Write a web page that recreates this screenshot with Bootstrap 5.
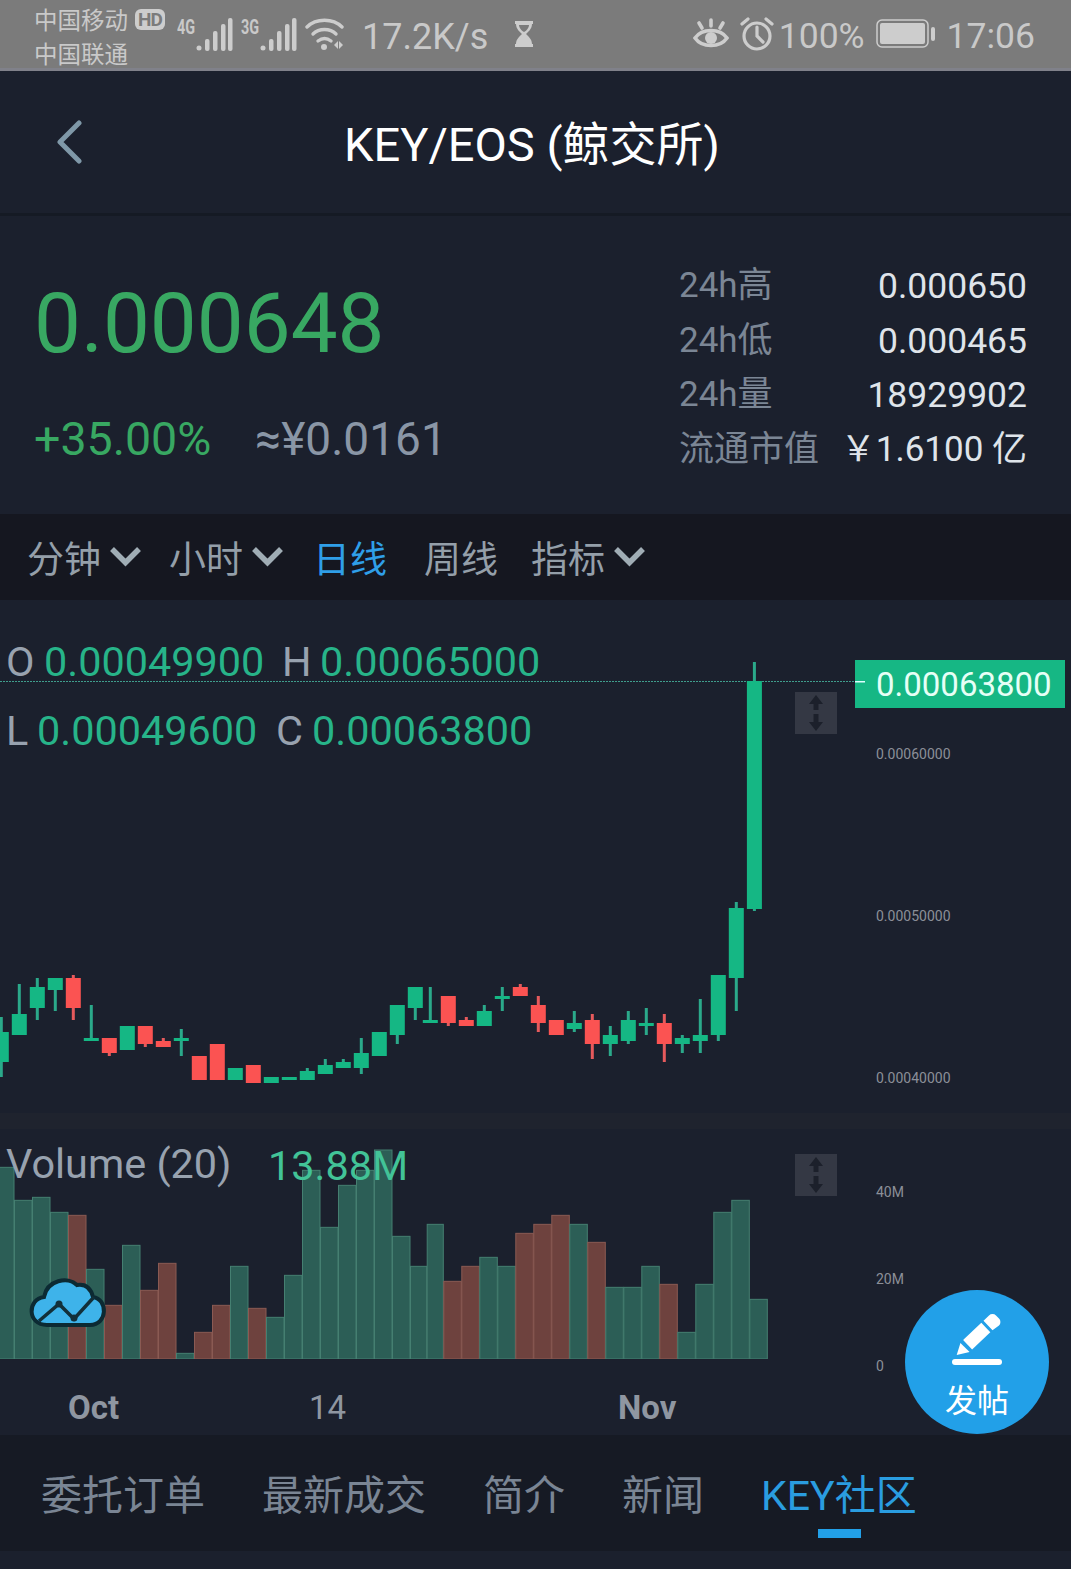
<!DOCTYPE html>
<html lang="zh">
  <head>
    <meta charset="UTF-8" />
    <meta name="viewport" content="width=device-width, initial-scale=1" />
    <title>KEY/EOS</title>
    <link href="https://cdn.jsdelivr.net/npm/bootstrap@5.3.3/dist/css/bootstrap.min.css" rel="stylesheet" />
    <style>
      body { background: #1b202d; font-family: Roboto, "Noto Sans CJK SC", sans-serif; width: 1071px; height: 1569px; overflow: hidden; position: relative; }
      .status-bar { height: 71px; background: #7b7b7b; border-bottom: 3px solid #80818a; color: #c9c9c9; padding: 0 36px 0 34px; }
      .carrier { font-size: 23.500px; line-height: 34px; width: 101px; margin-top: 8px; }
      .hd-tag { background: #cdcdcd; color: #7b7b7b; font-size: 19px; font-weight: 700; line-height: 21px; width: 30px; text-align: center; border-radius: 6px; margin: -29px 12px 0 0; letter-spacing: -1px; }
      .net-tag { font-size: 20px; font-weight: 700; line-height: 16px; margin: -15px 0 0 0; transform: scaleX(.72); transform-origin: left; width: 19px; }
      .speed { font-size: 36px; margin: 6px 26px 0 17px; line-height: 1; }
      .status-num { font-size: 35.500px; line-height: 1; margin-top: 6px; }
      .alarm-ic { margin: 0 5px 0 11px; }
      .batt-ic { margin: 0 10px 0 11px; }
      .top-head { height: 145px; border-bottom: 3px solid #151a24; padding-left: 57px; }
      .top-title { font-size: 47px; color: #fff; margin: 4px 0 0 261px; line-height: 1; }
      .stat-box { height: 298px; padding: 0 44px 0 34px; }
      .big-price { font-size: 83.500px; color: #38a862; line-height: 1; margin-top: 66px; }
      .sub-line { font-size: 46px; line-height: 1; margin-top: 50px; }
      .up-pct { color: #38a862; margin-right: 44px; font-size: 46.500px; }
      .cny-val { color: #8a96a6; }
      .stat-side { width: 348px; margin-top: 43px; font-size: 35.500px; }
      .stat-row { height: 54.5px; line-height: 54px; }
      .stat-row span:first-child { color: #7b8695; font-size: 35px; }
      .stat-row span:last-child { color: #dfe4ea; }
      .stat-row:last-child span:last-child { font-size: 35px; }
      .period-bar { height: 86px; background: #151720; padding: 7px 0 0 27px; color: #949fa9; font-size: 37px; }
      .period-item { margin-right: 33px; line-height: 1; }
      .period-drop { margin-right: 27px; }
      .period-drop + .period-drop { margin-right: 29px; }
      .period-item.period-on { margin-right: 37px; }
      .period-item svg { margin-left: 8px; vertical-align: 6px; }
      .period-on { color: #2f9fe8; }
      .chart-wrap { height: 835px; }
      .chart-wrap svg { display: block; }
      .foot-tabs { height: 116px; background: #161a24; padding: 7px 0 0 41px; gap: 57px; font-size: 41px; color: #7a8594; }
      .foot-tab { line-height: 1; position: relative; }
      .foot-on { color: #2a9de0; }
      .foot-on::after { content: ""; position: absolute; left: 57px; bottom: -21px; width: 43px; height: 9px; background: #22a0e8; }
      .post-btn { position: absolute; left: 905px; top: 1290px; width: 144px; height: 144px; background: #22a0e8; color: #fff; font-size: 32px; line-height: 1; padding: 6px 0 0; border: 0; }
      .post-btn svg { display: block; margin: 0 auto 20px; }
      .axis-sm { font-size: 14px; fill: #8b8f98; font-family: Roboto, sans-serif; }
      .legend-a { font-size: 41.400px; font-family: Roboto, sans-serif; }
      .time-tick { font-size: 33px; fill: #8f96a1; font-family: Roboto, sans-serif; }
    </style>
  </head>
  <body>
    <div class="status-bar d-flex align-items-center justify-content-between">
      <div class="d-flex align-items-center">
        <div class="carrier">中国移动<br />中国联通</div>
        <div class="hd-tag">HD</div>
        <div class="net-tag">4G</div>
        <svg width="37" height="34" viewBox="0 0 37 34" fill="#cdcdcd"><circle cx="3" cy="31" r="2.5"/><rect x="9" y="22" width="4.5" height="12" rx="2"/><rect x="17" y="14" width="4.5" height="20" rx="2"/><rect x="25" y="7" width="4.5" height="27" rx="2"/><rect x="32" y="1" width="4.5" height="33" rx="2"/></svg>
        <div class="net-tag ms-2">3G</div>
        <svg width="37" height="34" viewBox="0 0 37 34" fill="#cdcdcd"><circle cx="3" cy="31" r="2.5"/><rect x="9" y="22" width="4.5" height="12" rx="2"/><rect x="17" y="14" width="4.5" height="20" rx="2"/><rect x="25" y="7" width="4.5" height="27" rx="2"/><rect x="32" y="1" width="4.5" height="33" rx="2"/></svg>
        <svg class="ms-2" width="40" height="34" viewBox="0 0 40 34" fill="none" stroke="#cdcdcd" stroke-width="3.4" stroke-linecap="round"><path d="M2 10C11 1 28 1 37 10"/><path d="M8 17c6-6 17-6 23 0"/><path d="M13 24c4-3 9-3 13 0"/><circle cx="19" cy="30" r="3" fill="#cdcdcd" stroke="none"/><path d="M29 31l4-4v8zM34 27l4 4-4 4z" fill="#cdcdcd" stroke="none" transform="translate(0 -3)"/></svg>
        <div class="speed">17.2K/s</div>
        <svg width="20" height="26" viewBox="0 0 20 26" fill="#cdcdcd"><path d="M1 0h18v3h-1c0 5-4 8-6 10 2 2 6 5 6 10h1v3H1v-3h1c0-5 4-8 6-10-2-2-6-5-6-10H1z"/><path d="M5 4h10c0 3-3 6-5 7-2-1-5-4-5-7z" fill="#7b7b7b"/></svg>
      </div>
      <div class="d-flex align-items-center">
        <svg width="36" height="33" viewBox="0 0 36 33" fill="none" stroke="#cdcdcd" stroke-width="3.6" stroke-linecap="round"><path d="M2 20C9 10 27 10 34 20 27 30 9 30 2 20z"/><circle cx="18" cy="20" r="6" fill="#cdcdcd" stroke="none"/><path d="M18 2v6M6 5l3 5M30 5l-3 5"/></svg>
        <svg class="alarm-ic" width="34" height="34" viewBox="0 0 34 34" fill="none" stroke="#cdcdcd" stroke-width="3.2" stroke-linecap="round"><circle cx="17" cy="19" r="13"/><path d="M17 10v9l6 6M2 7l6-5M32 7l-6-5"/></svg>
        <div class="status-num">100%</div>
        <svg class="batt-ic" width="61" height="30" viewBox="0 0 61 30"><rect x="1" y="1" width="51" height="27" rx="5" fill="none" stroke="#cdcdcd" stroke-width="1.5"/><rect x="4" y="4" width="45" height="21" rx="2" fill="#cdcdcd"/><rect x="55" y="8" width="4" height="14" rx="2" fill="#cdcdcd"/></svg>
        <div class="status-num">17:06</div>
      </div>
    </div>

    <div class="top-head d-flex align-items-center">
      <svg width="26" height="44" viewBox="0 0 26 44" fill="none" stroke="#7f98a8" stroke-width="5" stroke-linecap="round" stroke-linejoin="round"><path d="M22 3 3 22l19 19"/></svg>
      <div class="top-title">KEY/EOS (鲸交所)</div>
    </div>

    <div class="stat-box d-flex justify-content-between">
      <div>
        <div class="big-price">0.000648</div>
        <div class="sub-line"><span class="up-pct">+35.00%</span><span class="cny-val">≈¥0.0161</span></div>
      </div>
      <div class="stat-side">
        <div class="stat-row d-flex justify-content-between"><span>24h高</span><span>0.000650</span></div>
        <div class="stat-row d-flex justify-content-between"><span>24h低</span><span>0.000465</span></div>
        <div class="stat-row d-flex justify-content-between"><span>24h量</span><span>18929902</span></div>
        <div class="stat-row d-flex justify-content-between"><span>流通市值</span><span>￥1.6100 亿</span></div>
      </div>
    </div>

    <div class="period-bar d-flex align-items-center">
      <div class="period-item period-drop">分钟<svg width="33" height="21" viewBox="0 0 33 21" fill="none" stroke="#a0adb5" stroke-width="5.500" stroke-linejoin="miter"><path d="M3 3l13.500 13.500L30 3"/></svg></div>
      <div class="period-item period-drop">小时<svg width="33" height="21" viewBox="0 0 33 21" fill="none" stroke="#a0adb5" stroke-width="5.500" stroke-linejoin="miter"><path d="M3 3l13.500 13.500L30 3"/></svg></div>
      <div class="period-item period-on">日线</div>
      <div class="period-item">周线</div>
      <div class="period-item">指标<svg width="33" height="21" viewBox="0 0 33 21" fill="none" stroke="#a0adb5" stroke-width="5.500" stroke-linejoin="miter"><path d="M3 3l13.500 13.500L30 3"/></svg></div>
    </div>

    <div class="chart-wrap">
      <svg id="chart" width="1071" height="835" viewBox="0 600 1071 835"></svg>
    </div>

    <div class="foot-tabs d-flex align-items-center">
      <div class="foot-tab">委托订单</div>
      <div class="foot-tab">最新成交</div>
      <div class="foot-tab">简介</div>
      <div class="foot-tab">新闻</div>
      <div class="foot-tab foot-on">KEY社区</div>
    </div>

    <button class="post-btn btn rounded-circle" type="button">
      <svg width="60" height="52" viewBox="0 0 60 52" fill="#fff"><path d="M9.700 42l3.700-12.100 9.200 9.200z"/><path d="M16.100 27l18.200-17.200 9 9.400L25.100 36.400z"/><path d="M36.500 7.800 42 2.500a5 5 0 0 1 7 0l3 3a5 5 0 0 1 0 7L45.500 17.200z"/><rect x="5" y="46" width="50" height="6" rx="3"/></svg>
      发帖
    </button>

    <script>
      // [x, bodyTop, bodyBottom, wickTop, wickBottom, up]  y 值按裁图坐标，960 + v / 3
      var candles = [
        [1.3,216,306,171,351,1],[19.3,162,225,72,225,1],[37.3,81,144,54,180,1],[55.3,54,90,54,153,1],
        [73.3,54,144,45,180,0],[91.3,234,243,135,243,1],[109.3,234,279,234,288,0],[127.3,198,270,198,270,1],
        [145.3,198,252,198,261,0],[163.3,243,261,234,261,0],[181.3,234,243,207,288,1],[199.3,288,360,288,360,0],
        [217.3,252,360,252,360,0],[235.3,324,360,324,360,1],[253.3,315,369,315,369,0],[271.3,351,369,351,369,1],
        [289.3,351,360,351,360,1],[307.3,333,360,324,360,1],[325.3,315,342,297,342,1],[343.3,306,324,297,324,1],
        [361.3,279,324,234,342,1],[379.3,216,288,216,288,1],[397.3,135,225,135,252,1],[415.3,81,144,81,180,1],
        [430.3,180,189,81,189,1],[448.3,108,189,108,198,0],[466.3,180,198,171,198,0],[484.3,153,198,135,198,1],
        [502.3,108,117,81,153,1],[520.3,81,108,72,108,0],[538.3,135,189,108,216,0],[556.3,180,225,180,225,0],
        [574.3,189,207,153,216,1],[592.3,180,252,162,297,0],[610.3,225,252,198,288,1],[628.3,180,243,153,252,1],
        [646.3,189,198,144,225,1],[664.3,189,252,162,306,0],[682.3,234,252,225,279,1],[700.3,225,243,117,279,1],
        [718.3,45,225,45,243,1],[736.3,-156,54,-174,153,1],[754.4,-837,-153,-894,-147,1]
      ];
      // 成交量柱顶部，1130 + v / 3，底部 1359
      var volTops = [112,211,202,247,256,418,526,346,481,400,670,607,526,409,535,562,436,121,292,166,121,60,319,409,283,454,409,382,409,310,283,256,283,337,472,472,409,463,607,463,247,211,508];
      var volUp = [1,1,1,1,0,1,0,1,0,0,1,0,0,1,0,1,1,1,1,1,1,1,1,1,1,0,0,1,1,0,0,0,1,0,1,1,1,0,1,1,1,1,1];

      var s = "";
      // 两个面板之间的分隔带
      s += '<rect x="0" y="1113" width="1071" height="16" fill="#1f232e"/>';
      // 右侧价格线
      s += '<line x1="0" y1="681.500" x2="855" y2="681.500" stroke="#3f9d8c" stroke-width="1" stroke-dasharray="2 1"/>';

      candles.forEach(function (c) {
        var color = c[5] ? "#15b784" : "#fb5352";
        var wick = c[5] ? "#2ba98a" : "#e65a5c";
        var y = function (v) { return 960 + v / 3; };
        s += '<rect x="' + (c[0] - 1.5) + '" y="' + y(c[3]) + '" width="3" height="' + (y(c[4]) - y(c[3])) + '" fill="' + wick + '"/>';
        s += '<rect x="' + (c[0] - 7.5) + '" y="' + y(c[1]) + '" width="15" height="' + (y(c[2]) - y(c[1])) + '" fill="' + color + '"/>';
      });

      volTops.forEach(function (t, i) {
        var left, w = 18;
        if (i === 0) { left = -4; }
        else if (i <= 22) { left = 14 + 18 * (i - 1); }
        else if (i === 23) { left = 410; w = 16.7; }
        else if (i === 24) { left = 426.7; w = 16.6; }
        else { left = 443.3 + 18 * (i - 25); }
        var top = 1130 + t / 3;
        var fill = volUp[i] ? "#2c5e56" : "#6e423e";
        var edge = volUp[i] ? "#457f71" : "#8a5a53";
        s += '<rect x="' + (left + .5) + '" y="' + top + '" width="' + (w - .5) + '" height="' + (1359 - top) + '" fill="' + fill + '" stroke="' + edge + '" stroke-width="1"/>';
      });
      s += '<rect x="0" y="1359" width="800" height="4" fill="#1b202d"/>';

      // 图例
      s += '<text class="legend-a" x="6" y="676" fill="#98a2af">O</text><text class="legend-a" x="44" y="676" fill="#27b489">0.00049900</text>';
      s += '<text class="legend-a" x="282" y="676" fill="#98a2af">H</text><text class="legend-a" x="320" y="676" fill="#27b489">0.00065000</text>';
      s += '<text class="legend-a" x="6" y="745" fill="#98a2af">L</text><text class="legend-a" x="37" y="745" fill="#27b489">0.00049600</text>';
      s += '<text class="legend-a" x="276" y="745" fill="#98a2af">C</text><text class="legend-a" x="312" y="745" fill="#27b489">0.00063800</text>';
      s += '<text class="legend-a" x="6" y="1178" fill="#98a2af">Volume (20)</text><text class="legend-a" x="268" y="1180" fill="#42c397">13.88M</text>';

      // 价格标签
      s += '<rect x="855" y="660" width="210" height="48" fill="#16b784"/><rect x="855" y="681" width="10" height="1.500" fill="#dff"/>';
      s += '<text x="876" y="696" font-size="33" font-family="Roboto, sans-serif" fill="#e6fff6">0.00063800</text>';

      // Y 轴
      [["0.00060000", 876, 759], ["0.00050000", 876, 921], ["0.00040000", 876, 1083], ["40M", 876, 1197], ["20M", 876, 1284], ["0", 876, 1371]].forEach(function (a) {
        s += '<text class="axis-sm" x="' + a[1] + '" y="' + a[2] + '">' + a[0] + "</text>";
      });

      // 缩放按钮
      [692, 1154].forEach(function (y) {
        s += '<rect x="795" y="' + y + '" width="42" height="42" fill="#343844"/>';
        s += '<path d="M816 ' + (y + 3) + 'l-7 9h4.500v6h5v-6h4.500zM813.500 ' + (y + 22) + 'v8h-4.500l7 9 7-9h-4.500v-8z" fill="#1c202b"/>';
      });

      // 时间轴
      s += '<text class="time-tick" x="68" y="1419" font-weight="700">Oct</text><text class="time-tick" x="309" y="1419">14</text><text class="time-tick" x="618" y="1419" font-weight="700">Nov</text>';

      // 水印云
      s += '<path d="M47 1325c-20 0-20-26-3-28 3-17 24-21 33-12 12-2 15 8 16 12 15 2 15 28-3 28z" fill="#3eb3ea" stroke="#0c2a33" stroke-width="4"/>';
      s += '<path d="M39 1321l20-17 15 15 20-22" fill="none" stroke="#12303a" stroke-width="3.500"/><circle cx="59" cy="1304" r="3.500" fill="#12303a"/><circle cx="74" cy="1318" r="3.500" fill="#12303a"/>';

      document.getElementById("chart").innerHTML = s;
    </script>
    <script src="https://cdn.jsdelivr.net/npm/bootstrap@5.3.3/dist/js/bootstrap.bundle.min.js"></script>
  </body>
</html>
